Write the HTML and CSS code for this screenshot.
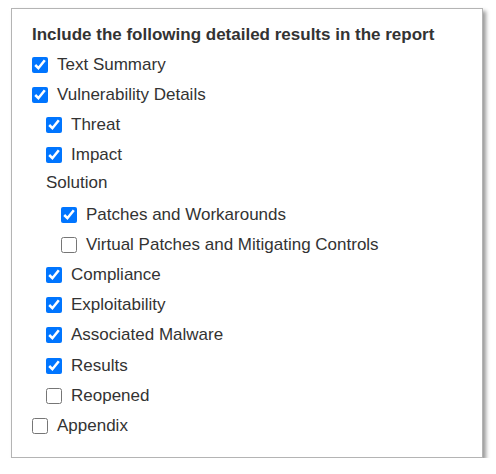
FILE: index.html
```html
<!DOCTYPE html>
<html>
<head>
<meta charset="utf-8">
<link rel="stylesheet" href="styles.css">
</head>
<body>
<div class="panel">
  <div class="title">Include the following detailed results in the report</div>
  <label class="row l0"><input type="checkbox" checked><span>Text Summary</span></label>
  <label class="row l0"><input type="checkbox" checked><span>Vulnerability Details</span></label>
  <label class="row l1"><input type="checkbox" checked><span>Threat</span></label>
  <label class="row l1"><input type="checkbox" checked><span>Impact</span></label>
  <div class="row l1 plain">Solution</div>
  <label class="row l2"><input type="checkbox" checked><span>Patches and Workarounds</span></label>
  <label class="row l2"><input type="checkbox"><span>Virtual Patches and Mitigating Controls</span></label>
  <label class="row l1"><input type="checkbox" checked><span>Compliance</span></label>
  <label class="row l1"><input type="checkbox" checked><span>Exploitability</span></label>
  <label class="row l1"><input type="checkbox" checked><span>Associated Malware</span></label>
  <label class="row l1 gap-top"><input type="checkbox" checked><span>Results</span></label>
  <label class="row l1"><input type="checkbox"><span>Reopened</span></label>
  <label class="row l0"><input type="checkbox"><span>Appendix</span></label>
</div>
</body>
</html>
```
FILE: styles.css
```css
html, body {
  margin: 0;
  padding: 0;
  background: #ffffff;
}
body {
  font-family: "Liberation Sans", Arial, sans-serif;
  color: #333333;
}
.panel {
  box-sizing: border-box;
  margin: 8px 0 0 11px;
  width: 472px;
  height: 450px;
  border: 1px solid #b4b4b4;
  box-shadow: 3px 3px 4px rgba(0, 0, 0, 0.4);
  padding: 16px 0 0 20px;
  display: flex;
  flex-direction: column;
}
.title {
  font-size: 17px;
  font-weight: bold;
  height: 25px;
  line-height: 20px;
}
.row {
  display: flex;
  align-items: center;
  height: 30px;
  font-size: 17px;
  gap: 9px;
  flex-shrink: 0;
}
.row input {
  width: 16px;
  height: 16px;
  margin: 0;
  accent-color: #0075ff;
}
.l0 { padding-left: 0; }
.l1 { padding-left: 14px; }
.l2 { padding-left: 29px; }
.plain {
  box-sizing: border-box;
  padding-bottom: 4px;
}
.gap-top { margin-top: 1px; }
```
